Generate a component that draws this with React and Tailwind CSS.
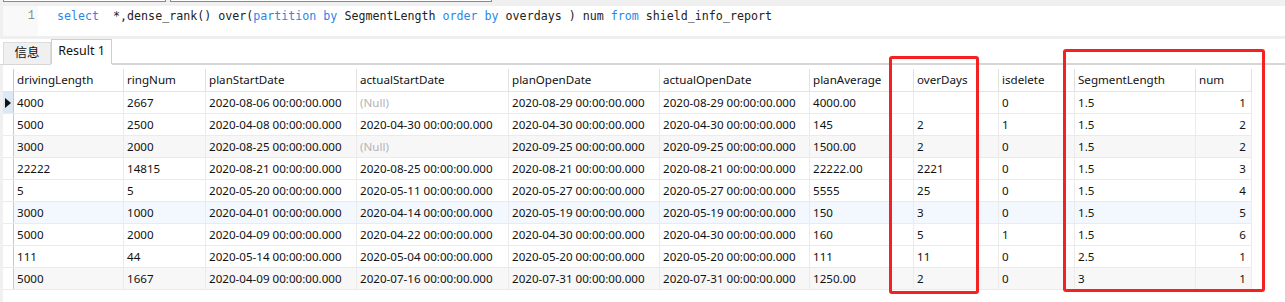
const columns = [
  { key: "drivingLength", w: "w-[110px]" },
  { key: "ringNum", w: "w-[82px]" },
  { key: "planStartDate", w: "w-[151px]" },
  { key: "actualStartDate", w: "w-[152px]" },
  { key: "planOpenDate", w: "w-[151px]" },
  { key: "actualOpenDate", w: "w-[150px]" },
  { key: "planAverage", w: "w-[104px]" },
  { key: "overDays", w: "w-[85px]" },
  { key: "isdelete", w: "w-[76px]" },
  { key: "SegmentLength", w: "w-[121px]" },
  { key: "num", w: "w-[56px]", right: true },
];

const T = " 00:00:00.000";
const NULL = null;

const rows = [
  ["4000", "2667", "2020-08-06" + T, NULL, "2020-08-29" + T, "2020-08-29" + T, "4000.00", "", "0", "1.5", "1"],
  ["5000", "2500", "2020-04-08" + T, "2020-04-30" + T, "2020-04-30" + T, "2020-04-30" + T, "145", "2", "1", "1.5", "2"],
  ["3000", "2000", "2020-08-25" + T, NULL, "2020-09-25" + T, "2020-09-25" + T, "1500.00", "2", "0", "1.5", "2"],
  ["22222", "14815", "2020-08-21" + T, "2020-08-25" + T, "2020-08-21" + T, "2020-08-21" + T, "22222.00", "2221", "0", "1.5", "3"],
  ["5", "5", "2020-05-20" + T, "2020-05-11" + T, "2020-05-27" + T, "2020-05-27" + T, "5555", "25", "0", "1.5", "4"],
  ["3000", "1000", "2020-04-01" + T, "2020-04-14" + T, "2020-05-19" + T, "2020-05-19" + T, "150", "3", "0", "1.5", "5"],
  ["5000", "2000", "2020-04-09" + T, "2020-04-22" + T, "2020-04-30" + T, "2020-04-30" + T, "160", "5", "1", "1.5", "6"],
  ["111", "44", "2020-05-14" + T, "2020-05-04" + T, "2020-05-20" + T, "2020-05-20" + T, "111", "11", "0", "2.5", "1"],
  ["5000", "1667", "2020-04-09" + T, "2020-07-16" + T, "2020-07-31" + T, "2020-07-31" + T, "1250.00", "2", "0", "3", "1"],
];

// background per row (alternate + hovered row)
const rowBg = ["bg-white", "bg-white", "bg-[#f7f7f7]", "bg-white", "bg-white", "bg-[#f2f8fd]", "bg-white", "bg-white", "bg-[#f7f7f7]"];

function Keyword({ children }) {
  return <span className="text-[#2b86e8]">{children}</span>;
}

export default function App() {
  return (
    <div
      className="relative w-[1285px] h-[302px] overflow-hidden bg-white text-[#111]"
      style={{ fontFamily: '"Noto Sans", "Noto Sans CJK SC", sans-serif' }}
    >
      {/* toolbar bottom edge */}
      <div className="h-[6px] bg-[#f0f0f0] flex items-start pl-[3px] gap-[4px]">
        <div className="w-[163px] h-[2px] border-b border-x border-[#8a8a8a] bg-white" />
        <div className="w-[322px] h-[2px] border-b border-x border-[#8a8a8a] bg-white" />
      </div>

      {/* editor */}
      <div className="flex h-[30px] border-l-[3px] border-[#f0f0f0]">
        <div className="w-[35px] bg-[#f9f9f9] text-right pr-[3px] pt-[3px] text-[12px] leading-[14px] text-[#8c8c8c] font-['Liberation_Mono',monospace]">
          1
        </div>
        <div
          className="pl-[19px] pt-[3px] text-[11.65px] leading-[14px] whitespace-pre text-[#222]"
          style={{ fontFamily: '"DejaVu Sans Mono", "Liberation Mono", monospace' }}
        >
          <Keyword>select</Keyword>  *,dense_rank() over(<Keyword>partition</Keyword> <Keyword>by</Keyword> SegmentLength <Keyword>order</Keyword> <Keyword>by</Keyword> overdays ) num <Keyword>from</Keyword> shield_info_report
        </div>
      </div>

      <div className="h-[3px] bg-[#efefef]" />

      {/* tabs */}
      <div className="flex h-[25px] pl-[3px] items-end border-l-[3px] border-[#f0f0f0] -ml-[3px]">
        <div className="w-[48px] h-[22px] bg-[#f0f0f0] border border-b-0 border-[#dcdcdc] flex items-center justify-center text-[12.5px]">
          信息
        </div>
        <div className="w-[61px] h-[25px] bg-white border border-b-0 border-[#cfcfcf] flex items-center justify-center text-[12.5px] pb-[1px]">
          Result 1
        </div>
        <div className="flex-1 h-[1px] bg-[#d6d6d6]" />
      </div>
      <div className="flex h-[1px]">
        <div className="w-[51px] bg-[#d6d6d6]" />
        <div className="w-[61px] bg-white" />
        <div className="flex-1 bg-[#d6d6d6]" />
      </div>

      {/* grid */}
      <div className="flex border-l-[3px] border-[#f0f0f0] h-[238px] pt-[4px]">
        <div className="text-[11.6px]">
          <div className="flex h-[23px] border-b border-[#e3e3e3]">
            <div className="w-[11px] border-r border-[#c9c9c9]" />
            {columns.map((c) => (
              <div key={c.key} className={`${c.w} border-r border-[#e0e0e0] pl-[3px] flex items-center whitespace-nowrap overflow-hidden`}>
                {c.key}
              </div>
            ))}
          </div>
          {rows.map((r, i) => (
            <div key={i} className={`flex h-[22px] border-b border-[#ebebeb] ${rowBg[i]}`}>
              <div
                className={`w-[11px] border-r border-[#c9c9c9] flex items-center justify-center ${
                  i === 0 ? "bg-[#dce8f4]" : "bg-white"
                }`}
              >
                {i === 0 && (
                  <svg width="6" height="10" viewBox="0 0 6 10">
                    <path d="M0 0 L6 5 L0 10 Z" fill="#111" />
                  </svg>
                )}
              </div>
              {columns.map((c, j) => (
                <div
                  key={c.key}
                  className={`${c.w} border-r border-[#ebebeb] flex items-center whitespace-nowrap overflow-hidden ${
                    c.right ? "justify-end pr-[5px]" : "pl-[3px]"
                  }`}
                >
                  {r[j] === null ? <span className="text-[#b4b4b4]">(Null)</span> : r[j]}
                </div>
              ))}
            </div>
          ))}
        </div>
      </div>

      {/* annotations */}
      <div className="absolute left-[889px] top-[56px] w-[90px] h-[238px] border-[3px] border-[#f42121] rounded-[3px]" />
      <div className="absolute left-[1063px] top-[49px] w-[202px] h-[243px] border-[3px] border-[#f42121] rounded-[3px]" />
    </div>
  );
}
